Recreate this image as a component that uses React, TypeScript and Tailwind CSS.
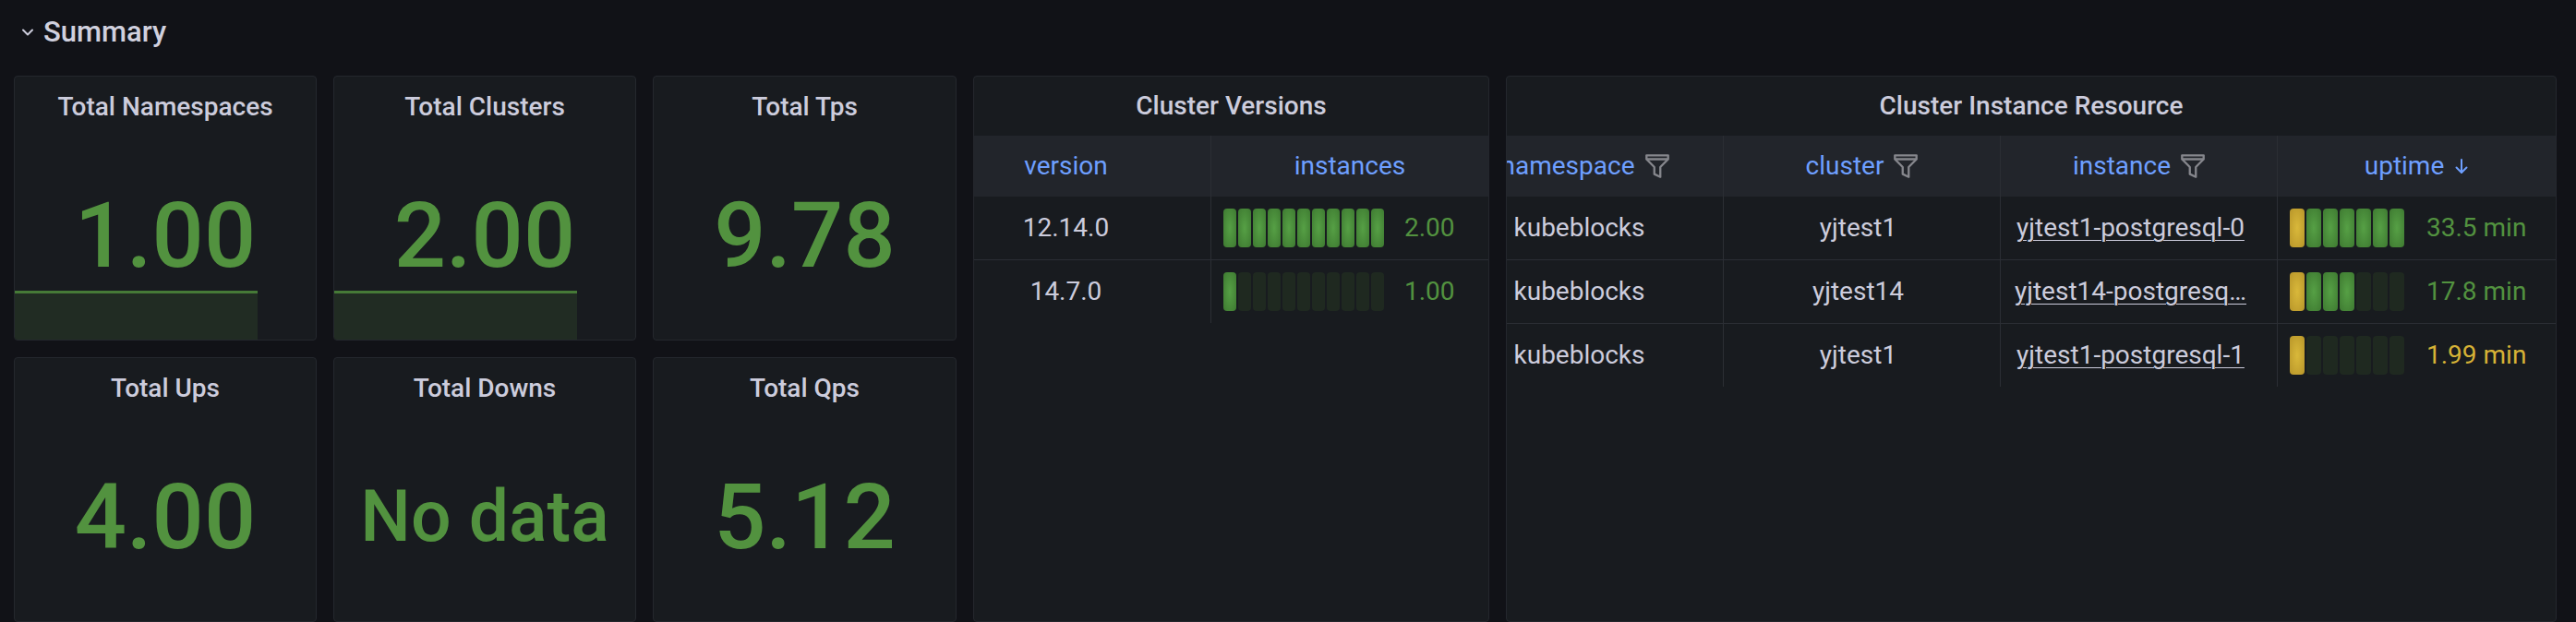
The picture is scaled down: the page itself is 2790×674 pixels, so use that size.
import React from 'react';

const green = 'text-[#52923f]';

function Funnel() {
  return (
    <svg width="26" height="26" viewBox="2.5 2 19 20" fill="none" stroke="#85868c" strokeWidth="1.8" strokeLinejoin="round" strokeLinecap="round">
      <path d="M3 3h18v3.2l-6.5 6.6V21l-5-2.4v-5.8L3 6.2z" />
      <path d="M3.5 6.2h17" />
    </svg>
  );
}

function ArrowDown() {
  return (
    <svg width="16" height="20" viewBox="0 0 16 20" fill="none" stroke="#6e9fff" strokeWidth="2" strokeLinecap="round" strokeLinejoin="round">
      <path d="M8 3v14" />
      <path d="M2.5 11.5L8 17l5.5-5.5" />
    </svg>
  );
}

type SegProps = { total: number; lit: number; yellowFirst?: boolean; wide?: boolean };

function Segments({ total, lit, yellowFirst, wide }: SegProps) {
  return (
    <div className="flex gap-[2px]">
      {Array.from({ length: total }).map((_, i) => {
        let color = 'bg-[#1f2920]';
        if (i < lit) {
          color =
            yellowFirst && i === 0
              ? 'bg-radial from-[#d9b83a] to-[#b8962a]'
              : 'bg-radial from-[#56a045] to-[#3e7a31]';
        }
        return (
          <div
            key={i}
            className={`${wide ? 'w-[16px]' : 'w-[14px]'} h-[42px] rounded-[4px] ${color}`}
          />
        );
      })}
    </div>
  );
}

function StatPanel({ title, value, spark, small }: { title: string; value: string; spark?: boolean; small?: boolean }) {
  return (
    <div className="relative flex flex-col overflow-hidden rounded-[4px] border border-[#24272d] bg-[#181b1f]">
      <div className="flex h-[65px] shrink-0 items-center justify-center text-[28px] font-medium text-[#ccccdc]">
        {title}
      </div>
      {spark && (
        <div className="absolute bottom-0 left-0 h-[53px] w-[263px] border-t-[3px] border-[#467a37] bg-[#212c23]" />
      )}
      <div className="relative flex flex-1 items-center justify-center pb-[6px]">
        <span className={`${small ? 'text-[77px]' : 'text-[99px]'} font-medium leading-none ${green}`}>{value}</span>
      </div>
    </div>
  );
}

const line = 'border-[#2b2e34]';

function HeaderCell({ label, w, filter, sort, last }: { label: string; w: string; filter?: boolean; sort?: boolean; last?: boolean }) {
  return (
    <div className={`${w} flex items-center justify-center gap-[11px] text-[#6e9fff] ${last ? '' : `border-r ${line}`}`}>
      <span>{label}</span>
      {filter && <Funnel />}
      {sort && <ArrowDown />}
    </div>
  );
}

export default function App() {
  const versions = [
    { v: '12.14.0', lit: 11, val: '2.00' },
    { v: '14.7.0', lit: 1, val: '1.00' },
  ];
  const instances = [
    { ns: 'kubeblocks', cl: 'yjtest1', inst: 'yjtest1-postgresql-0', lit: 7, val: '33.5 min', yellow: false },
    { ns: 'kubeblocks', cl: 'yjtest14', inst: 'yjtest14-postgresq…', lit: 4, val: '17.8 min', yellow: false },
    { ns: 'kubeblocks', cl: 'yjtest1', inst: 'yjtest1-postgresql-1', lit: 1, val: '1.99 min', yellow: true },
  ];

  return (
    <div className="h-[674px] w-[2790px] overflow-hidden bg-[#111217] font-['Roboto',sans-serif] text-[#ccccdc]">
      <div className="flex h-[70px] items-center gap-[10px] pl-[23px]">
        <svg width="14" height="8" viewBox="0 0 14 8" fill="none" stroke="#ccccdc" strokeWidth="2" strokeLinecap="round" strokeLinejoin="round">
          <path d="M2 1.5l5 5 5-5" />
        </svg>
        <span className="text-[31px] font-medium text-[#d0d0de]">Summary</span>
      </div>

      <div className="mt-[12px] flex gap-[18px] pl-[15px]">
        <div className="grid grid-cols-[328px_328px_329px] grid-rows-[287px_287px] gap-[18px]">
          <StatPanel title="Total Namespaces" value="1.00" spark />
          <StatPanel title="Total Clusters" value="2.00" spark />
          <StatPanel title="Total Tps" value="9.78" />
          <StatPanel title="Total Ups" value="4.00" />
          <StatPanel title="Total Downs" value="No data" small />
          <StatPanel title="Total Qps" value="5.12" />
        </div>

        {/* Cluster Versions */}
        <div className="flex h-[592px] w-[559px] flex-col overflow-hidden rounded-[4px] border border-[#24272d] bg-[#181b1f]">
          <div className="flex h-[64px] shrink-0 items-center justify-center text-[28px] font-medium">Cluster Versions</div>
          <div className="overflow-hidden text-[28px]">
            <div className="-ml-[57px] w-[614px]">
              <div className="flex h-[66px] bg-[#22252b]">
                <HeaderCell label="version" w="w-[314px]" />
                <HeaderCell label="instances" w="w-[300px]" last />
              </div>
              {versions.map((r, i) => (
                <div key={r.v} className={`flex ${i < versions.length - 1 ? `h-[69px] border-b ${line}` : 'h-[68px]'}`}>
                  <div className={`flex w-[314px] items-center justify-center border-r ${line}`}>{r.v}</div>
                  <div className="flex w-[300px] items-center gap-[22px] pl-[13px]">
                    <Segments total={11} lit={r.lit} />
                    <span className={green}>{r.val}</span>
                  </div>
                </div>
              ))}
            </div>
          </div>
        </div>

        {/* Cluster Instance Resource */}
        <div className="flex h-[592px] w-[1138px] flex-col overflow-hidden rounded-[4px] border border-[#24272d] bg-[#181b1f]">
          <div className="flex h-[64px] shrink-0 items-center justify-center text-[28px] font-medium">Cluster Instance Resource</div>
          <div className="overflow-hidden text-[28px]">
            <div className="-ml-[65px] w-[1201px]">
              <div className="flex h-[66px] bg-[#22252b]">
                <HeaderCell label="namespace" w="w-[300px]" filter />
                <HeaderCell label="cluster" w="w-[300px]" filter />
                <HeaderCell label="instance" w="w-[300px]" filter />
                <HeaderCell label="uptime" w="w-[301px]" sort last />
              </div>
              {instances.map((r, i) => (
                <div key={r.inst} className={`flex ${i < instances.length - 1 ? `h-[69px] border-b ${line}` : 'h-[68px]'}`}>
                  <div className={`flex w-[300px] items-center justify-center border-r pr-[12px] ${line}`}>{r.ns}</div>
                  <div className={`flex w-[300px] items-center justify-center border-r pr-[8px] ${line}`}>{r.cl}</div>
                  <div className={`flex w-[300px] min-w-0 items-center justify-center border-r pl-[8px] pr-[26px] ${line}`}>
                    <span className="whitespace-nowrap underline decoration-1 underline-offset-[4px]">{r.inst}</span>
                  </div>
                  <div className="flex w-[301px] items-center gap-[24px] pl-[13px]">
                    <Segments total={7} lit={r.lit} yellowFirst wide />
                    <span className={r.yellow ? 'text-[#d6b236]' : green}>{r.val}</span>
                  </div>
                </div>
              ))}
            </div>
          </div>
        </div>
      </div>
    </div>
  );
}
